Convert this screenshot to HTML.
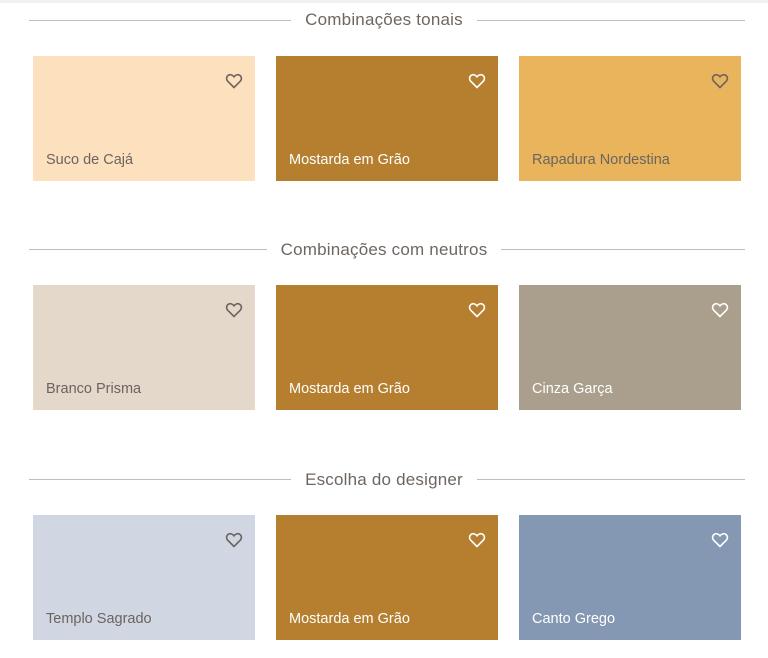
<!DOCTYPE html><html><head><style>
body{margin:0;width:768px;height:658px;background:#fff;font-family:"Liberation Sans",sans-serif;position:relative;overflow:hidden}
.top{position:absolute;left:0;top:0;width:768px;height:3px;background:#f1f1f1}
.h{position:absolute;left:29px;width:716px;height:1px;background:#c4bcb5}
.t{position:absolute;left:0;width:768px;text-align:center;font-size:17px;letter-spacing:0.2px;color:#6e6660}
.t span{background:#fff;padding:0 14px}
.c{position:absolute;width:222px;height:125px}
.c svg{position:absolute;right:12px;top:16px}
.c div{position:absolute;left:13px;top:96px;font-size:14.5px}
.d div{color:#fff}.l div{color:#6b6460}
</style></head><body>
<div class="top"></div>
<div class="h" style="top:20px"></div><div class="t" style="top:10px"><span>Combinações tonais</span></div>
<div class="h" style="top:249px"></div><div class="t" style="top:240px"><span>Combinações com neutros</span></div>
<div class="h" style="top:479px"></div><div class="t" style="top:470px"><span>Escolha do designer</span></div>
<svg width="0" height="0" style="position:absolute"><defs><path id="hp" d="M9 15.5 L2.8 9.3 C1 7.5 1.2 4.6 3.3 3.3 C5.2 2.1 7.6 2.8 9 4.8 C10.4 2.8 12.8 2.1 14.7 3.3 C16.8 4.6 17 7.5 15.2 9.3 Z" fill="none" stroke-width="1.6"/></defs></svg>
<div class="c l" style="left:33px;top:56px;background:#fde0bd"><svg width="18" height="18"><use href="#hp" stroke="#6b6460"/></svg><div>Suco de Cajá</div></div>
<div class="c d" style="left:276px;top:56px;background:#b57f2f"><svg width="18" height="18"><use href="#hp" stroke="#fff"/></svg><div>Mostarda em Grão</div></div>
<div class="c l" style="left:519px;top:56px;background:#eab45c"><svg width="18" height="18"><use href="#hp" stroke="#6b6460"/></svg><div>Rapadura Nordestina</div></div>
<div class="c l" style="left:33px;top:285px;background:#e3d8c9"><svg width="18" height="18"><use href="#hp" stroke="#6b6460"/></svg><div>Branco Prisma</div></div>
<div class="c d" style="left:276px;top:285px;background:#b57f2f"><svg width="18" height="18"><use href="#hp" stroke="#fff"/></svg><div>Mostarda em Grão</div></div>
<div class="c d" style="left:519px;top:285px;background:#aa9e8d"><svg width="18" height="18"><use href="#hp" stroke="#fff"/></svg><div>Cinza Garça</div></div>
<div class="c l" style="left:33px;top:515px;background:#d0d6e2"><svg width="18" height="18"><use href="#hp" stroke="#6b6460"/></svg><div>Templo Sagrado</div></div>
<div class="c d" style="left:276px;top:515px;background:#b57f2f"><svg width="18" height="18"><use href="#hp" stroke="#fff"/></svg><div>Mostarda em Grão</div></div>
<div class="c d" style="left:519px;top:515px;background:#8498b3"><svg width="18" height="18"><use href="#hp" stroke="#fff"/></svg><div>Canto Grego</div></div>
</body></html>
